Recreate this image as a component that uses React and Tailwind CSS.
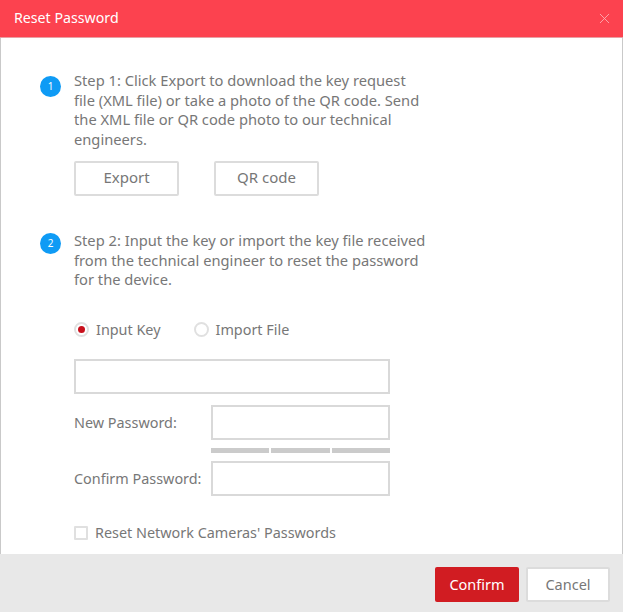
import { X } from 'lucide-react';

function StepBadge({ n }) {
  return (
    <div className="w-[21px] h-[21px] rounded-full bg-[#0f9bf5] text-white text-[10px] flex items-center justify-center shrink-0 mt-[2px]">{n}</div>
  );
}

function Field({ className }) {
  return <div className={`border-2 border-[#d9d9d9] bg-white h-[35px] ${className}`} />;
}

function OutlineButton({ children, className }) {
  return (
    <button type="button" className={`h-[35px] border-2 border-[#dcdcdc] rounded-[2px] bg-white text-[15px] leading-[28px] pb-[2px] text-[#777777] ${className}`}>{children}</button>
  );
}

export default function App() {
  return (
    <div className="w-[623px] h-[612px] flex flex-col bg-white font-['Noto_Sans',sans-serif] text-[14.4px] text-[#777777] overflow-hidden">
      <header className="h-[38px] shrink-0 bg-[#fc424f] border-b border-[#e8a0a4] flex items-center justify-between pl-[14px] pr-[10px] text-white">
        <h1 className="text-[14.2px] text-white pb-[1px]">Reset Password</h1>
        <X className="w-[17px] h-[17px] text-[#fbb4b8]" strokeWidth={1.2} />
      </header>

      <main className="flex-1 border-x border-[#c9c9c9] pl-[39px] pt-[33px]">
        <section className="flex gap-[13px]">
          <div className="pt-[3px]"><StepBadge n="1" /></div>
          <div>
            <p className="w-[350px] text-[14.7px] leading-[19.7px]">Step 1: Click Export to download the key request file (XML file) or take a photo of the QR code. Send the XML file or QR code photo to our technical engineers.</p>
            <div className="flex gap-[35px] mt-[11px]">
              <OutlineButton className="w-[105px]">Export</OutlineButton>
              <OutlineButton className="w-[105px]">QR code</OutlineButton>
            </div>
          </div>
        </section>

        <section className="flex gap-[13px] mt-[35px]">
          <StepBadge n="2" />
          <div>
            <p className="w-[352px] text-[14.7px] leading-[19.7px]">Step 2: Input the key or import the key file received from the technical engineer to reset the password for the device.</p>

            <div className="flex items-center mt-[30px] h-[20px]">
              <span className="w-[15px] h-[15px] rounded-full border-2 border-[#e0e0e0] flex items-center justify-center mr-[7px]">
                <span className="w-[7px] h-[7px] rounded-full bg-[#c8101c]" />
              </span>
              <span>Input Key</span>
              <span className="w-[15px] h-[15px] rounded-full border-2 border-[#e0e0e0] ml-[33px] mr-[7px]" />
              <span>Import File</span>
            </div>

            <Field className="w-[316px] mt-[19px]" />

            <div className="grid grid-cols-[137px_179px] mt-[11px] items-center w-[316px]">
              <label>New Password:</label>
              <Field className="w-[179px]" />
            </div>
            <div className="flex gap-[2px] ml-[137px] w-[179px] mt-[8px]">
              <div className="flex-1 h-[5px] bg-[#cbcbcb]" />
              <div className="flex-1 h-[5px] bg-[#cbcbcb]" />
              <div className="flex-1 h-[5px] bg-[#cbcbcb]" />
            </div>
            <div className="grid grid-cols-[137px_179px] mt-[8px] items-center w-[316px]">
              <label>Confirm Password:</label>
              <Field className="w-[179px]" />
            </div>

            <div className="flex items-center mt-[27px] h-[20px]">
              <span className="w-[14px] h-[14px] border-2 border-[#e0e0e0] rounded-[1px] mr-[7px]" />
              <span>Reset Network Cameras' Passwords</span>
            </div>
          </div>
        </section>
      </main>

      <footer className="h-[58px] shrink-0 bg-[#e8e8e8] flex items-start justify-end gap-[7px] pt-[13px] pr-[13px]">
        <button type="button" className="w-[84px] h-[35px] rounded-[2px] bg-[#d11c22] text-white text-[14.5px]">Confirm</button>
        <button type="button" className="w-[84px] h-[35px] rounded-[2px] border-2 border-[#dcdcdc] bg-white text-[#777777] text-[14.5px]">Cancel</button>
      </footer>
    </div>
  );
}
